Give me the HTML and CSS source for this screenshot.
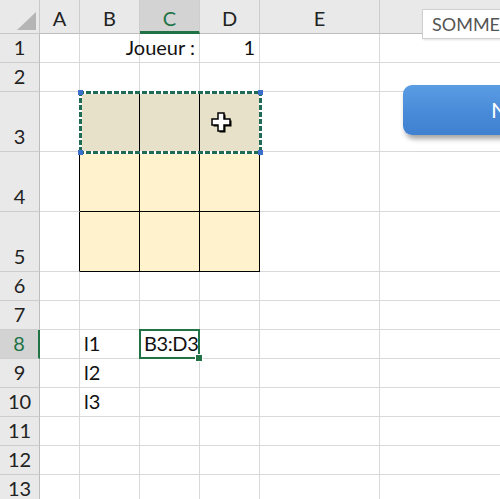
FILE: index.html
```html
<!DOCTYPE html>
<html lang="fr">
<head>
<meta charset="utf-8">
<title>Feuille</title>
<link rel="stylesheet" href="styles.css">
</head>
<body>
<div class="sheet">
  <div class="grid">
    <!-- header row -->
    <div class="corner"><svg width="40" height="34" viewBox="0 0 40 34"><polygon points="36,12 36,30 17,30" fill="#b5b5b5"/></svg></div>
    <div class="ch">A</div><div class="ch">B</div><div class="ch sel">C</div><div class="ch">D</div><div class="ch">E</div><div class="ch last"></div>
    <!-- row 1 -->
    <div class="rh">1</div><div class="c"></div><div class="c"></div><div class="c r">Joueur :</div><div class="c r">1</div><div class="c"></div><div class="c"></div>
    <!-- row 2 -->
    <div class="rh">2</div><div class="c"></div><div class="c tt"></div><div class="c tt"></div><div class="c tt"></div><div class="c"></div><div class="c"></div>
    <!-- row 3 -->
    <div class="rh">3</div><div class="c tl"></div><div class="c tb hl"></div><div class="c tb hl"></div><div class="c tb hl"></div><div class="c"></div><div class="c"></div>
    <!-- row 4 -->
    <div class="rh">4</div><div class="c tl"></div><div class="c tb"></div><div class="c tb"></div><div class="c tb"></div><div class="c"></div><div class="c"></div>
    <!-- row 5 -->
    <div class="rh">5</div><div class="c tl"></div><div class="c tb"></div><div class="c tb"></div><div class="c tb"></div><div class="c"></div><div class="c"></div>
    <!-- row 6 -->
    <div class="rh">6</div><div class="c"></div><div class="c"></div><div class="c"></div><div class="c"></div><div class="c"></div><div class="c"></div>
    <!-- row 7 -->
    <div class="rh">7</div><div class="c"></div><div class="c"></div><div class="c"></div><div class="c"></div><div class="c"></div><div class="c"></div>
    <!-- row 8 -->
    <div class="rh sel">8</div><div class="c"></div><div class="c l">l1</div><div class="c l active"><span class="act-border"></span><span class="handle"></span>B3:D3</div><div class="c"></div><div class="c"></div><div class="c"></div>
    <!-- row 9 -->
    <div class="rh">9</div><div class="c"></div><div class="c l">l2</div><div class="c"></div><div class="c"></div><div class="c"></div><div class="c"></div>
    <!-- row 10 -->
    <div class="rh">10</div><div class="c"></div><div class="c l">l3</div><div class="c"></div><div class="c"></div><div class="c"></div><div class="c"></div>
    <!-- row 11 -->
    <div class="rh">11</div><div class="c"></div><div class="c"></div><div class="c"></div><div class="c"></div><div class="c"></div><div class="c"></div>
    <!-- row 12 -->
    <div class="rh">12</div><div class="c"></div><div class="c"></div><div class="c"></div><div class="c"></div><div class="c"></div><div class="c"></div>
    <!-- row 13 -->
    <div class="rh">13</div><div class="c"></div><div class="c"></div><div class="c"></div><div class="c"></div><div class="c"></div><div class="c"></div>
  </div>

  <!-- overlays -->
  <div class="ants">
    <span class="hd h-tl"></span><span class="hd h-tr"></span><span class="hd h-bl"></span><span class="hd h-br"></span>
  </div>
  <div class="tip">SOMME(</div>
  <div class="btn">Nouvelle partie</div>
  <svg class="cursor" width="24" height="24" viewBox="0 0 24 24">
    <polygon points="9,3 15,3 15,9 21,9 21,15 15,15 15,21 9,21 9,15 3,15 3,9 9,9" fill="#000" transform="translate(1.5,1.5)"/>
    <polygon points="9,3 15,3 15,9 21,9 21,15 15,15 15,21 9,21 9,15 3,15 3,9 9,9" fill="#fff" stroke="#000" stroke-width="1.5"/>
  </svg>
</div>
</body>
</html>
```

FILE: styles.css
```css
html, body {
  margin: 0;
  padding: 0;
  background: #fff;
}
body {
  width: 500px;
  height: 499px;
  overflow: hidden;
  font-family: Lato, "Open Sans", "Liberation Sans", sans-serif;
  color: #111;
}
.sheet {
  position: relative;
  width: 500px;
  height: 499px;
  overflow: hidden;
}
.grid {
  display: grid;
  grid-template-columns: 40px 40px 60px 60px 60px 120px 160px;
  grid-template-rows: 34px 29px 29px 60px 60px 60px 29px 29px 29px 29px 29px 29px 29px 29px;
}
.corner {
  background: #e9e9e9;
  border-right: 1px solid #c8c8c8;
  border-bottom: 1px solid #c8c8c8;
  box-sizing: border-box;
}
.corner svg { display: block; }
.ch {
  box-sizing: border-box;
  background: #e9e9e9;
  border-right: 1px solid #cdcdcd;
  border-bottom: 1px solid #bdbdbd;
  display: flex;
  align-items: center;
  justify-content: center;
  font-size: 20px;
  color: #222;
  padding-top: 2px;
}
.ch.sel {
  background: #d3d3d3;
  color: #217346;
  border-bottom: 3px solid #217346;
  padding-top: 4px;
}
.rh {
  box-sizing: border-box;
  background: #e9e9e9;
  border-right: 1px solid #bdbdbd;
  border-bottom: 1px solid #cdcdcd;
  display: flex;
  align-items: flex-end;
  justify-content: center;
  font-size: 20px;
  color: #222;
  padding-bottom: 3px;
}
.rh.sel {
  background: #d3d3d3;
  color: #217346;
  border-right: 2px solid #217346;
}
.c {
  box-sizing: border-box;
  border-right: 1px solid #d9d9d9;
  border-bottom: 1px solid #d9d9d9;
  display: flex;
  align-items: flex-end;
  font-size: 20px;
  padding: 0 4px 3px 4px;
  white-space: nowrap;
  position: relative;
}
.c.r { justify-content: flex-end; }
.c.l { justify-content: flex-start; }
.c.tl { border-right-color: #000; }
.c.tt { border-bottom-color: #000; }
.c.tb {
  background: #fff2cc;
  border-right-color: #000;
  border-bottom-color: #000;
}
.c.hl { background: #e8e1c9; }

.active {
  padding-left: 4px;
  letter-spacing: -0.4px;
}
.act-border {
  position: absolute;
  left: -1px;
  top: -1px;
  right: -1px;
  bottom: -1px;
  border: 2px solid #217346;
}
.handle {
  position: absolute;
  right: -4px;
  bottom: -4px;
  width: 6px;
  height: 6px;
  background: #217346;
  border: 1px solid #fff;
  z-index: 2;
}

.ants {
  position: absolute;
  left: 79px;
  top: 91px;
  width: 183px;
  height: 63px;
  box-sizing: border-box;
  background:
    repeating-linear-gradient(90deg, #1f6b55 0 5px, #fff 5px 7px) top left / 100% 3px no-repeat,
    repeating-linear-gradient(90deg, #1f6b55 0 5px, #fff 5px 7px) bottom left / 100% 3px no-repeat,
    repeating-linear-gradient(180deg, #1f6b55 0 5px, #fff 5px 7px) top left / 3px 100% no-repeat,
    repeating-linear-gradient(180deg, #1f6b55 0 5px, #fff 5px 7px) top right / 3px 100% no-repeat;
}
.hd {
  position: absolute;
  width: 5px;
  height: 5px;
  background: #3b6fcb;
}
.h-tl { left: -1px; top: -1px; }
.h-tr { right: -1px; top: -1px; }
.h-bl { left: -1px; bottom: -1px; }
.h-br { right: -1px; bottom: -1px; }

.tip {
  position: absolute;
  left: 422px;
  top: 9px;
  width: 120px;
  height: 30px;
  box-sizing: border-box;
  background: #fff;
  border: 1px solid #cfcfcf;
  box-shadow: 1px 1px 2px rgba(0,0,0,0.12);
  font-size: 18px;
  color: #555;
  padding-left: 9px;
  line-height: 28px;
  white-space: nowrap;
}

.btn {
  position: absolute;
  left: 403px;
  top: 85px;
  width: 220px;
  height: 50px;
  border-radius: 9px;
  background: linear-gradient(180deg, #5b9de3 0%, #4a8cd9 50%, #3f80d0 100%);
  box-shadow: 2px 4px 5px rgba(0,0,0,0.35);
  color: #fff;
  font-size: 22px;
  line-height: 50px;
  padding-left: 88px;
  box-sizing: border-box;
  white-space: nowrap;
}

.cursor {
  position: absolute;
  left: 209px;
  top: 110px;
}
```
